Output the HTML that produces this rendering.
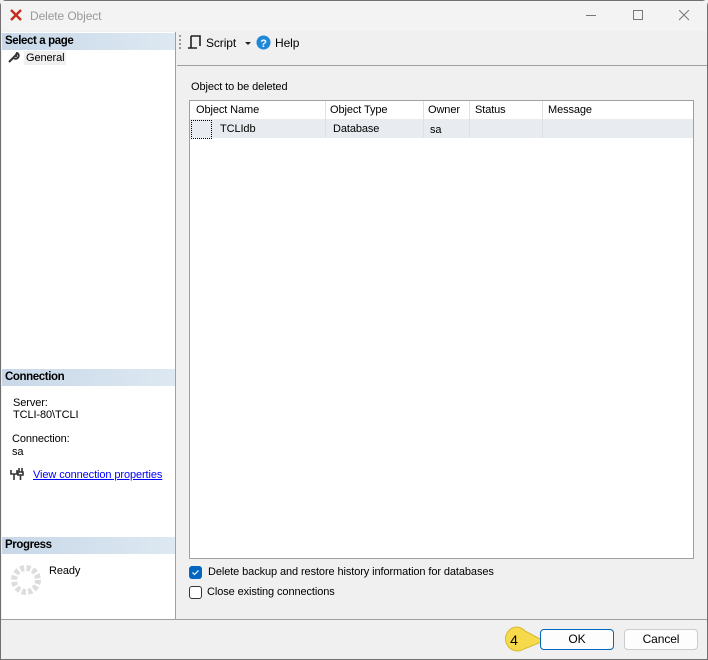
<!DOCTYPE html>
<html><head><style>
*{margin:0;padding:0;box-sizing:border-box}
body{width:708px;height:660px;background:#f0f0f0;font-family:"Liberation Sans",sans-serif;font-size:11px;letter-spacing:-0.1px;color:#000;position:relative;overflow:hidden}
.a{position:absolute}
.win{left:0;top:0;width:708px;height:660px;border:1px solid #707070;border-radius:6px 6px 0 0}
.hdr{background:linear-gradient(90deg,#c8d8e8,#dde8f2);font-weight:bold;height:17px;line-height:17px;padding-left:3px;font-size:11.5px;letter-spacing:-0.4px}
</style></head><body>
<div class="a win"></div>
<div class="a" style="left:1px;top:1px;width:706px;height:30px;background:#f3f3f3"></div>
<svg class="a" style="left:9px;top:8px" width="14" height="14"><path d="M2 2L12 12M12 2L2 12" stroke="#c42b1c" stroke-width="2.4"/></svg>
<div class="a" style="left:30px;top:9px;color:#999;font-size:12px">Delete Object</div>
<div class="a" style="left:586px;top:15px;width:10px;height:1px;background:#777"></div>
<div class="a" style="left:633px;top:10px;width:10px;height:10px;border:1px solid #777"></div>
<svg class="a" style="left:679px;top:10px" width="11" height="11"><path d="M0 0L10 10M10 0L0 10" stroke="#777"/></svg>
<div class="a" style="left:2px;top:32px;width:174px;height:587px;background:#fff;border-right:1px solid #a0a0a0"></div>
<div class="a hdr" style="left:2px;top:33px;width:173px">Select a page</div>
<svg class="a" style="left:8px;top:52px" width="12" height="11"><path d="M1 10L6 5M5 5A3 3 0 1 0 9 1L8 3L7 4L9 4" stroke="#333" stroke-width="2" fill="none"/></svg>
<div class="a" style="left:24px;top:51px;background:#f0f0f0;padding:1px 2px">General</div>
<div class="a hdr" style="left:2px;top:369px;width:173px">Connection</div>
<div class="a" style="left:13px;top:397px;line-height:12px">Server:<br>TCLI-80\TCLI</div>
<div class="a" style="left:12px;top:433px;line-height:13px">Connection:<br>sa</div>
<svg class="a" style="left:10px;top:467px" width="14" height="14"><path d="M1 3V7H7V3M4 7V13M9 1V5M12 1V5M8 5H13V8H8ZM10.5 8V13" stroke="#333" stroke-width="1.6" fill="none"/></svg>
<div class="a" style="left:33px;top:469px;color:#0000ff;text-decoration:underline">View connection properties</div>
<div class="a hdr" style="left:2px;top:537px;width:173px">Progress</div>
<svg class="a" style="left:10px;top:564px" width="32" height="32"><circle cx="16" cy="16" r="12" fill="none" stroke="#ddd" stroke-width="6" stroke-dasharray="4 2.3"/></svg>
<div class="a" style="left:49px;top:565px">Ready</div>
<div class="a" style="left:177px;top:32px;width:530px;height:34px;background:#f0f0f0;border-bottom:1px solid #a0a0a0"></div>
<div class="a" style="left:179px;top:35px;width:1px;height:14px;border-left:2px dotted #999"></div>
<svg class="a" style="left:187px;top:35px" width="14" height="15"><path d="M4 1H13V11M4 1V13H1M4 13H10" stroke="#222" stroke-width="1.6" fill="none"/></svg>
<div class="a" style="left:206px;top:36px;font-size:12px">Script</div>
<svg class="a" style="left:245px;top:42px" width="6" height="4"><path d="M0 0H6L3 3Z" fill="#222"/></svg>
<svg class="a" style="left:256px;top:35px" width="15" height="15"><circle cx="7.5" cy="7.5" r="7" fill="#1e88d8"/><text x="7.5" y="12" text-anchor="middle" fill="#fff" font-size="11" font-weight="bold" font-family="Liberation Sans">?</text></svg>
<div class="a" style="left:275px;top:36px;font-size:12px">Help</div>
<div class="a" style="left:191px;top:81px">Object to be deleted</div>
<div class="a" style="left:189px;top:100px;width:505px;height:459px;background:#fff;border:1px solid #a0a0a0"></div>
<div class="a" style="left:190px;top:119px;width:503px;height:19px;background:#e8ecf0"></div>
<div class="a" style="left:325px;top:101px;width:1px;height:37px;background:#e0e0e0"></div>
<div class="a" style="left:423px;top:101px;width:1px;height:37px;background:#e0e0e0"></div>
<div class="a" style="left:469px;top:101px;width:1px;height:37px;background:#e0e0e0"></div>
<div class="a" style="left:542px;top:101px;width:1px;height:37px;background:#e0e0e0"></div>
<div class="a" style="left:196px;top:104px">Object Name</div>
<div class="a" style="left:330px;top:104px">Object Type</div>
<div class="a" style="left:428px;top:104px">Owner</div>
<div class="a" style="left:475px;top:104px">Status</div>
<div class="a" style="left:548px;top:104px">Message</div>
<div class="a" style="left:191px;top:120px;width:21px;height:19px;border:1px dotted #000"></div>
<div class="a" style="left:220px;top:123px">TCLIdb</div>
<div class="a" style="left:333px;top:123px">Database</div>
<div class="a" style="left:430px;top:124px">sa</div>
<div class="a" style="left:189px;top:566px;width:13px;height:13px;background:#0067c0;border-radius:3px"></div>
<svg class="a" style="left:191px;top:568px" width="9" height="9"><path d="M1.5 4.5L3.5 6.5L7.5 2.5" stroke="#fff" stroke-width="1.2" fill="none"/></svg>
<div class="a" style="left:208px;top:566px">Delete backup and restore history information for databases</div>
<div class="a" style="left:189px;top:586px;width:13px;height:13px;border:1px solid #333;border-radius:3px;background:#fff"></div>
<div class="a" style="left:207px;top:586px">Close existing connections</div>
<div class="a" style="left:1px;top:619px;width:706px;height:1px;background:#a0a0a0"></div>
<svg class="a" style="left:500px;top:625px" width="50" height="30"><path d="M16 2A12 12 0 1 0 24 24L44 16L25 6A12 12 0 0 0 16 2Z" fill="#f7d94c" stroke="#d8b830"/><text x="14" y="20" text-anchor="middle" font-size="14" font-family="Liberation Sans">4</text></svg>
<div class="a" style="left:540px;top:629px;width:74px;height:21px;background:#fdfdfd;border:1px solid #0067c0;border-radius:4px;text-align:center;line-height:19px;font-size:12px">OK</div>
<div class="a" style="left:624px;top:629px;width:74px;height:21px;background:#fdfdfd;border:1px solid #ccc;border-radius:4px;text-align:center;line-height:19px;font-size:12px">Cancel</div>
</body></html>
